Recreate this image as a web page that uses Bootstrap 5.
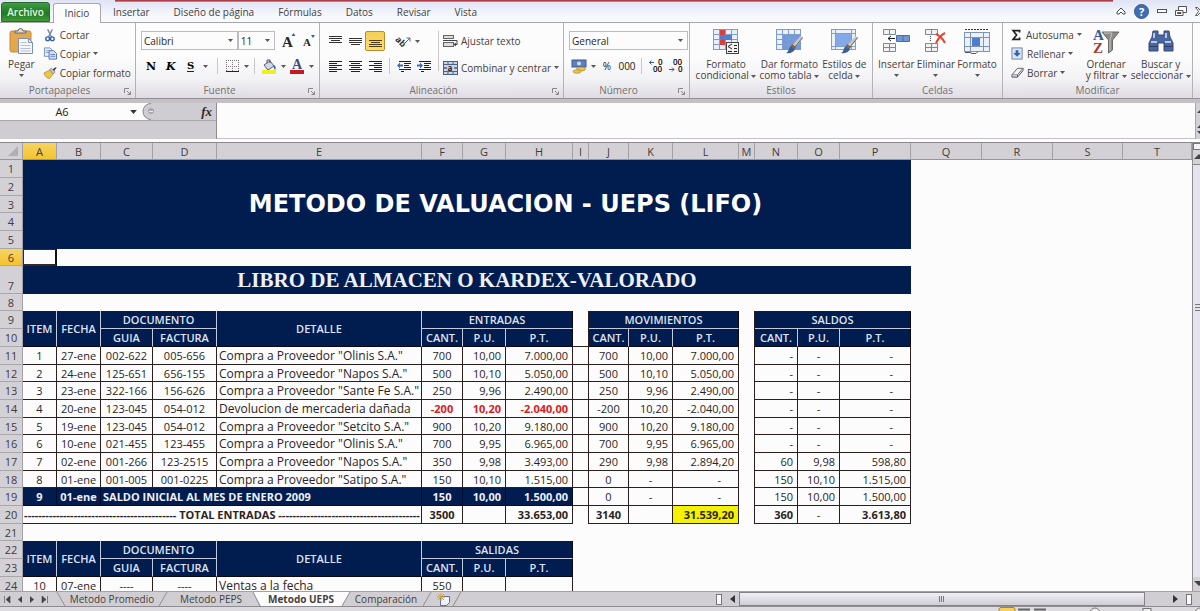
<!DOCTYPE html>
<html lang="es">
<head>
<meta charset="utf-8">
<meta name="viewport" content="width=device-width, initial-scale=1">
<title>Kardex valorado - Metodo UEPS</title>
<link href="https://cdn.jsdelivr.net/npm/bootstrap@5.3.0/dist/css/bootstrap.min.css" rel="stylesheet">
<style>
:root{--navy:#011c4f;--ink:#47403c;--line:#8f8c92;--head:#d3d1d6}
body{font-family:"Open Sans","Noto Sans",sans-serif;font-size:10px;line-height:12px;color:var(--ink);background:#fdfcfc;overflow:hidden}
button{border:0;background:none;padding:0;color:inherit;font:inherit;white-space:nowrap}
svg{display:block;flex:none;overflow:visible}
/* tab strip */
.strip{height:23px;background:linear-gradient(#dfe3f3,#f2f5fb 60%,#fbfbfd);border-bottom:1px solid #a8a6aa;position:relative}
.strip::before{content:"";position:absolute;left:115px;right:87px;top:0;height:2px;background:linear-gradient(#a52430,#d98c92)}
.strip .tab{height:22px;padding:2px 12px 0}
.strip .file{width:49px;height:20px;padding:0;margin:2px 3px 0 1px;background:linear-gradient(#3f9c43,#1f7a23 55%,#3f9a35);border:1px solid #2a6b2b;border-radius:3px 3px 0 0;color:#e9f5e4;font-weight:600}
.strip .current{height:20px;width:48px;padding:0 0 2px;margin-top:3px;background:#fdfcfc;border:1px solid #a8a6aa;border-bottom:0;border-radius:3px 3px 0 0}
/* ribbon */
.ribbon{height:76px;background:linear-gradient(#fdfcfc 45%,#f2f1f4 75%,#dfdde3);border-bottom:1px solid #929094}
.grp{flex:none;border-right:1px solid #b3b1b6;height:75px}
.grp .body{height:61px;padding:2px 0 0}
.grp .cap{height:14px;color:#74706f;text-align:center;position:relative}
.grp .cap svg{position:absolute;right:4px;top:4px}
.g1{width:136px}.g2{width:184px}.g3{width:244px}.g4{width:126px}.g5{width:183px}.g6{width:130px}.g7{width:190px}
.big{display:flex;flex-direction:column;align-items:center;height:58px;line-height:11px}
.big svg.ico{margin:3px 0 5px}
.big .dn{margin-top:4px}
.sm{display:flex;align-items:center;height:19px;gap:3px}
.tool{height:25px;padding-left:5px}
.tool + .tool{height:20px;align-items:center}
.ib{width:20px;height:20px;display:flex;align-items:center;justify-content:center;flex:none;color:#1b1818}
.car{width:8px;height:20px;display:flex;align-items:center;justify-content:center;flex:none}
.vs{width:1px;height:16px;background:#c9c7cc;flex:none}
.pick{appearance:none;height:19px;border:1px solid #bdbbc0;border-radius:0;background:#fdfcfc url("data:image/svg+xml,%3Csvg xmlns='http://www.w3.org/2000/svg' width='5' height='3'%3E%3Cpath d='M0 0h5L2.500 3z' fill='%23555'/%3E%3C/svg%3E") no-repeat right 4px center;padding:0 0 0 2px;font:inherit;color:#2b2725}
.pick-font{width:99px}.pick-size{width:38px}.pick-num{width:119px}
.hot{background:linear-gradient(#f6cf55,#f8dc70);border:1px solid #b98c2f;border-radius:2px}
/* formula bar */
.fbar{height:40px;background:#c5c3c8;border-top:4px solid #c5c0c3}
.namebox{width:217px;border-right:1px solid var(--line);background:#cfcdd2}
.namebox .top{height:18px;border-bottom:1px solid #aaa8ad}
.namebox input{width:124px;height:17px;border:0;padding:0;text-align:center;background:#fdfcfc;color:#222;font-size:11px}
.namebox .drop{width:18px;height:17px;background:#fdfcfc}
.fx{font:italic bold 13px "Liberation Serif",serif;color:#2d2a2a}
.formula{border:0;resize:none;background:#fdfcfc;height:35px}
.sidecell{width:5px;background:#d3d1d6;border-left:1px solid #a8a6aa;overflow:hidden}
/* sheet */
.work{margin-top:3px}
.pane{border-top:1px solid #8b888c}
table.cells{table-layout:fixed;width:100%;border-collapse:separate;border-spacing:0;font-size:11px;line-height:15px;color:#2b2423}
.cells .w16{width:16px}.cells .w23{width:23px}.cells .w34{width:34px}.cells .w40{width:40px}.cells .w41{width:41px}.cells .w42{width:42px}.cells .w43{width:43px}.cells .w44{width:44px}.cells .w52{width:52px}.cells .w64{width:64px}.cells .w66{width:66px}.cells .w67{width:67px}.cells .w70{width:70px}.cells .w71{width:71px}.cells .w205{width:205px}
.cells tr{height:18px}
.cells tr.slim{height:17px}
.cells tr.tall{height:28px}
.cells td,.cells th{padding:0;overflow:hidden;white-space:nowrap;text-align:center;font-weight:400;vertical-align:middle;line-height:15px}
.cells thead th{background:var(--head);border-right:1px solid #a3a1a6;border-bottom:1px solid #97959b;color:#3f3c3e}
.cells tbody th{background:var(--head);border-right:1px solid #a3a1a6;border-bottom:1px solid #a9a7ac;color:#3f3c3e}
.cells .sel{background:linear-gradient(#f8d560,#f3c32f)!important}
.cells .nv{background:var(--navy);color:#dfe3ef;font-weight:600;border-right:1px solid #c5cbdc;border-bottom:1px solid #c5cbdc}
.cells .nv.eb{border-bottom-color:#0a0a14}
.cells .nv.er{border-right-color:#0a0a14}
.cells .dk{background:var(--navy);color:#eef0f8;font-weight:700;border-right:1px solid #000b28;border-bottom:1px solid #000b28}
.cells .b{border-right:1px solid #2a1f1d;border-bottom:1px solid #2a1f1d}
.cells .edge{border-right:1px solid #2a1f1d}
.cells .r{text-align:right;padding-right:4px}
.cells .d1{text-align:right;padding-right:17px}
.cells .l{text-align:left;padding-left:2px}
.cells .b.l{font-size:12px}
.cells .f{font-weight:700}
.cells .neg{font-weight:700;color:#d8201c}
.cells .yel{background:#f4f200}
.cells .band1{background:var(--navy);color:#fff;font:bold 24px/28px "DejaVu Sans",sans-serif;padding:0 0 2px 77px}
.cells .band2{background:var(--navy);color:#eef0f8;font:bold 21px/26px "Liberation Serif",serif}
.cells .act{border:1px solid #3a2626;border-right:2px solid #111;border-bottom:2px solid #3a2626}
.vbar{width:8px;background:#d3d1d6;border-left:1px solid var(--line);border-top:1px solid #8b888c;overflow:hidden}
.vbar .split{height:7px;background:#f4f2f4;border:1px solid #777;border-right:0}
.vbar .thumb{background:#e4e3ee;border-top:1px solid #8b888c}
/* sheet tabs */
.foot{height:15px;background:#d0ced3;border-top:1px solid #a3a1a6}
.foot .shut{height:14px;line-height:14px}
.foot .on{background:#fdfcfc;font-weight:700;height:14px;line-height:14px}
.steps{width:57px}
.t1{width:90px}.t2{width:84px}.t3{width:80px}.t4{width:70px}
.hscroll{width:41%}
.hthumb{height:14px;border:1px solid #85828a;background:linear-gradient(#f0f0f5,#cfcdd6)}
.grip{width:6px;height:11px;border:1px solid #777;background:#fbfafa}
.status{height:5px;background:#dddbe0;border-top:1px solid #8f8c92;overflow:hidden}
</style>
</head>
<body>
<svg width="0" height="0" class="position-absolute" aria-hidden="true">
  <defs>
    <symbol id="dn" viewBox="0 0 5 3"><path d="M0 0h5L2.500 3z" fill="#5a5557"/></symbol>
    <symbol id="launch" viewBox="0 0 7 7"><path d="M.5 5V.5H5M3 3l3 3M6.500 3.500v3h-3" fill="none" stroke="#88858a"/></symbol>
    <symbol id="brush" viewBox="0 0 18 18"><path d="M17 1L9 10" stroke="#c9c6c4" stroke-width="3.500"/><path d="M17.500 1.500L10 11" stroke="#6e6865" stroke-width="1"/><path d="M7 8l4 3-1 2-4-3z" fill="#8a6236"/><path d="M6 10l4 3c-1 3-5 5-9 4 3-1 2-5 5-7z" fill="#3a6093"/></symbol>
  </defs>
</svg>
<div class="vh-100 d-flex flex-column">
  <nav class="strip d-flex flex-shrink-0" aria-label="Cinta">
    <button class="file">Archivo</button>
    <button class="current">Inicio</button>
    <button class="tab">Insertar</button>
    <button class="tab">Diseño de página</button>
    <button class="tab">Fórmulas</button>
    <button class="tab">Datos</button>
    <button class="tab">Revisar</button>
    <button class="tab">Vista</button>
    <div class="ms-auto d-flex align-items-center gap-2">
      <button aria-label="Minimizar cinta"><svg width="10" height="8" viewBox="0 0 10 8"><path d="M1 5l4-4 4 4v2H7L5 5 3 7H1z" fill="#fff" stroke="#4c4a50"/></svg></button>
      <button aria-label="Ayuda"><svg width="15" height="15" viewBox="0 0 15 15"><circle cx="7.500" cy="7.500" r="7" fill="#3f6fae" stroke="#345b93"/><text x="7.500" y="11.500" text-anchor="middle" font-size="11" font-weight="700" fill="#fff">?</text></svg></button>
      <button aria-label="Minimizar"><svg width="10" height="6" viewBox="0 0 10 6"><rect x=".5" y="1.500" width="9" height="3" fill="#fff" stroke="#55535a"/></svg></button>
      <button aria-label="Restaurar"><svg width="12" height="11" viewBox="0 0 12 11"><path d="M3.500 4V.5h8v6H8M.5 4.500H8v5H.5z" fill="#fff" stroke="#55535a"/><path d="M2.500 6.500H6v1H2.500z" fill="none" stroke="#55535a"/></svg></button>
      <button aria-label="Cerrar"><svg width="5" height="9" viewBox="0 0 5 9"><path d="M.5.5h2L5 3M.5 8.500h2L5 6M.5 .5l3 4-3 4" fill="#fff" stroke="#55535a"/></svg></button>
    </div>
  </nav>

  <div class="ribbon d-flex flex-shrink-0">
    <section class="grp g1">
      <div class="body d-flex">
        <button class="big ms-2"><svg class="ico" width="26" height="26" viewBox="0 0 26 26"><rect x="2" y="3" width="21" height="21" rx="2" fill="#e3a84e" stroke="#c28a38"/><path d="M7 5V3h3a2.500 2.500 0 015 0h3v2z" fill="#ddd" stroke="#666"/><path d="M10.500 10.500h10l4 4v11h-14z" fill="#f4f7fd" stroke="#7f8fb0"/><path d="M20.500 10.500v4h4" fill="none" stroke="#7f8fb0"/><path d="M12.500 14.500h6M12.500 17.500h10M12.500 20.500h10M12.500 23h10" stroke="#b4c0da"/></svg><span>Pegar</span><svg class="dn" width="5" height="3"><use href="#dn"/></svg></button>
        <div class="ps-2">
          <button class="sm"><svg width="14" height="14" viewBox="0 0 15 14"><path d="M5 1l4 8M10 1L6 9" stroke="#7d8aa0" stroke-width="1.500"/><circle cx="5" cy="11" r="2" fill="none" stroke="#2f5fa8" stroke-width="1.500"/><circle cx="10" cy="11" r="2" fill="none" stroke="#2f5fa8" stroke-width="1.500"/></svg>Cortar</button>
          <button class="sm"><svg width="14" height="13" viewBox="0 0 15 13"><path d="M1.500.5h6l2 2v7h-8z" fill="#eaf1fb" stroke="#6f8ab8"/><path d="M3 3.500h4M3 5.500h3" stroke="#7c98c8"/><path d="M6.500 3.500h5l3 3v6h-8z" fill="#d5e3f7" stroke="#4d70ab"/><path d="M8 7.500h5M8 9.500h5" stroke="#5d80ba"/></svg>Copiar<svg width="5" height="3"><use href="#dn"/></svg></button>
          <button class="sm"><svg width="14" height="13" viewBox="0 0 15 13"><path d="M1 7l6-3 4 4-4 5c-2 0-5-2-6-6z" fill="#f0c542" stroke="#a9822a" stroke-width=".7"/><path d="M7 3.500l2-1.500 4 4-2 2z" fill="#c3c6cc" stroke="#6b6b70" stroke-width=".7"/><path d="M10.500 3L14 .5l.5 1L12 5z" fill="#3c3a40"/></svg>Copiar formato</button>
        </div>
      </div>
      <div class="cap pe-3">Portapapeles<svg width="7" height="7"><use href="#launch"/></svg></div>
    </section>

    <section class="grp g2">
      <div class="body pt-2">
        <div class="tool d-flex">
          <select class="pick pick-font" aria-label="Fuente"><option>Calibri</option></select>
          <select class="pick pick-size" aria-label="Tamaño"><option>11</option></select>
          <button class="ib ms-1" aria-label="Aumentar tamaño"><svg width="14" height="16" viewBox="0 0 14 16"><text x="0" y="14" font-family="Liberation Serif,serif" font-weight="700" font-size="15" fill="#2a2728">A</text><path d="M9.500 3L11.500 0l2 3z" fill="#3b5f9b"/></svg></button>
          <button class="ib" aria-label="Disminuir tamaño"><svg width="12" height="14" viewBox="0 0 12 14"><text x="0" y="12" font-family="Liberation Serif,serif" font-weight="700" font-size="11" fill="#2a2728">A</text><path d="M8 1L10 4l2-3z" fill="#3b5f9b"/></svg></button>
        </div>
        <div class="tool d-flex">
          <button class="ib" aria-label="Negrita"><svg width="10" height="10" viewBox="0 0 10 10"><text x="0" y="9" font-weight="700" font-size="11" font-family="DejaVu Serif,serif">N</text></svg></button>
          <button class="ib" aria-label="Cursiva"><svg width="11" height="10" viewBox="0 0 11 10"><text x="0" y="9" font-weight="700" font-style="italic" font-size="11" font-family="DejaVu Serif,serif">K</text></svg></button>
          <button class="ib" aria-label="Subrayado"><svg width="8" height="12" viewBox="0 0 8 12"><text x="0" y="9" font-weight="700" font-size="10" font-family="DejaVu Serif,serif">S</text><path d="M0 11.500h7" stroke="#222"/></svg></button>
          <span class="car"><svg width="5" height="3"><use href="#dn"/></svg></span>
          <span class="vs ms-2 me-1"></span>
          <button class="ib" aria-label="Bordes"><svg width="13" height="13" viewBox="0 0 13 13"><path d="M.5 0v11M6.500 0v11M12.500 0v11M0 .5h13M0 6.500h13" stroke="#77747a" stroke-dasharray="1 1" fill="none"/><path d="M0 11.500h13" stroke="#222"/></svg></button>
          <span class="car"><svg width="5" height="3"><use href="#dn"/></svg></span>
          <span class="vs ms-1 me-1"></span>
          <button class="ib" aria-label="Relleno"><svg width="15" height="15" viewBox="0 0 15 15"><path d="M2 6l6-4 4 5-6 4z" fill="#cfd9e8" stroke="#4a5f82"/><path d="M5 4V1h3v3" fill="none" stroke="#555"/><path d="M12 6c2 1 2 4 1 5-1-1-1.500-3-1-5z" fill="#2f5fa8"/><rect y="11" width="14" height="4" fill="#f5ee1e"/></svg></button>
          <span class="car"><svg width="5" height="3"><use href="#dn"/></svg></span>
          <button class="ib" aria-label="Color de fuente"><svg width="15" height="15" viewBox="0 0 15 15"><text x="2" y="10" font-family="Liberation Serif,serif" font-weight="700" font-size="14" fill="#3c4c7c">A</text><rect y="11" width="14" height="4" fill="#c6191e"/></svg></button>
          <span class="car"><svg width="5" height="3"><use href="#dn"/></svg></span>
        </div>
      </div>
      <div class="cap pe-3">Fuente<svg width="7" height="7"><use href="#launch"/></svg></div>
    </section>

    <section class="grp g3">
      <div class="body pt-2 d-flex">
        <div>
          <div class="tool d-flex">
            <button class="ib" aria-label="Arriba"><svg width="13" height="12" viewBox="0 0 13 12"><path d="M0 1.500h13M0 3.500h13M2 5.500h9M0 7.500h13" stroke="#333"/></svg></button>
            <button class="ib" aria-label="Medio"><svg width="13" height="12" viewBox="0 0 13 12"><path d="M0 3.500h13M0 5.500h13M0 7.500h13M2 9.500h9" stroke="#333"/></svg></button>
            <button class="ib hot" aria-label="Abajo"><svg width="13" height="12" viewBox="0 0 13 12"><path d="M0 5.500h13M2 7.500h9M0 9.500h13M0 11.500h13" stroke="#4d3c14"/></svg></button>
            <button class="ib ms-2" aria-label="Orientación"><svg width="15" height="14" viewBox="0 0 15 14"><text x="0" y="9" font-size="9" font-weight="700" transform="rotate(45 3 6)" fill="#333">ab</text><path d="M5 13l9-9M14 7.500V4h-3.500" fill="none" stroke="#666"/></svg></button>
            <span class="car"><svg width="5" height="3"><use href="#dn"/></svg></span>
          </div>
          <div class="tool d-flex">
            <button class="ib" aria-label="Izquierda"><svg width="13" height="12" viewBox="0 0 13 12"><path d="M0 1.500h13M0 3.500h8M0 5.500h13M0 7.500h8M0 9.500h13M0 11.500h8" stroke="#222"/></svg></button>
            <button class="ib" aria-label="Centro"><svg width="13" height="12" viewBox="0 0 13 12"><path d="M0 1.500h13M2 3.500h9M0 5.500h13M2 7.500h9M0 9.500h13M2 11.500h9" stroke="#222"/></svg></button>
            <button class="ib" aria-label="Derecha"><svg width="13" height="12" viewBox="0 0 13 12"><path d="M0 1.500h13M5 3.500h8M0 5.500h13M5 7.500h8M0 9.500h13M5 11.500h8" stroke="#222"/></svg></button>
            <span class="vs ms-1 me-1"></span>
            <button class="ib" aria-label="Disminuir sangría"><svg width="15" height="12" viewBox="0 0 15 12"><path d="M2 1.500h12M7 3.500h7M7 5.500h5M7 7.500h7M2 9.500h12M4 11.500h3" stroke="#222"/><path d="M0 5.500l3-3v2h3v2H3v2z" fill="#3d6db5"/></svg></button>
            <button class="ib" aria-label="Aumentar sangría"><svg width="15" height="12" viewBox="0 0 15 12"><path d="M2 1.500h12M7 3.500h7M7 5.500h5M7 7.500h7M2 9.500h12M4 11.500h3" stroke="#222"/><path d="M6 5.500l-3-3v2H0v2h3v2z" fill="#3d6db5"/></svg></button>
          </div>
        </div>
        <span class="vs h-75 ms-1 me-1"></span>
        <div>
          <button class="sm mb-1"><svg width="15" height="14" viewBox="0 0 15 14"><rect x=".5" y="1.500" width="10" height="3" fill="#ddd" stroke="#666"/><rect x=".5" y="8.500" width="10" height="4" fill="#ddd" stroke="#666"/><path d="M0 6.500h14V11M14 10.500h-3M13 9l-2 1.500L13 12" fill="none" stroke="#444"/></svg>Ajustar texto</button>
          <button class="sm mt-2"><svg width="15" height="14" viewBox="0 0 15 14"><rect x=".5" y=".5" width="14" height="13" fill="#c9d6ec" stroke="#4a5f8a"/><path d="M5 .5v3M10 .5v3M.5 3.500h14M.5 10.500h14M5 10.500v3M10 10.500v3" stroke="#4a5f8a"/><path d="M1 7h3M11 7h3" stroke="#222"/><text x="4.500" y="10" font-size="8" font-weight="700" fill="#222">a</text></svg>Combinar y centrar<svg width="5" height="3"><use href="#dn"/></svg></button>
        </div>
      </div>
      <div class="cap pe-3">Alineación<svg width="7" height="7"><use href="#launch"/></svg></div>
    </section>

    <section class="grp g4">
      <div class="body pt-2">
        <div class="tool"><select class="pick pick-num" aria-label="Formato de número"><option>General</option></select></div>
        <div class="tool d-flex">
          <button class="ib" aria-label="Moneda"><svg width="16" height="15" viewBox="0 0 16 15"><rect x="1" y="1" width="14" height="7" fill="#5d80bb" stroke="#3b5a94"/><circle cx="8" cy="4.500" r="2" fill="#cfdcf2"/><ellipse cx="10" cy="10" rx="4.500" ry="2" fill="#e7c24a" stroke="#a5822a" stroke-width=".6"/><ellipse cx="6" cy="12.500" rx="4" ry="1.800" fill="#e7c24a" stroke="#a5822a" stroke-width=".6"/></svg></button>
          <span class="car"><svg width="5" height="3"><use href="#dn"/></svg></span>
          <button class="ib">%</button>
          <button class="ib">000</button>
          <span class="vs ms-1 me-1"></span>
          <button class="ib" aria-label="Aumentar decimales"><svg width="14" height="14" viewBox="0 0 14 14"><path d="M0 3.500h5M2.500 1.500l-2 2 2 2" stroke="#2f5fa8" fill="none"/><text x="9" y="6" font-size="8" font-weight="600">0</text><text x="4" y="13" font-size="8" font-weight="600">00</text></svg></button>
          <button class="ib" aria-label="Disminuir decimales"><svg width="14" height="14" viewBox="0 0 14 14"><path d="M0 10.500h5M3 8.500l2 2-2 2" stroke="#2f5fa8" fill="none"/><text x="4" y="6" font-size="8" font-weight="600">00</text><text x="9" y="13" font-size="8" font-weight="600">0</text></svg></button>
        </div>
      </div>
      <div class="cap pe-3">Número<svg width="7" height="7"><use href="#launch"/></svg></div>
    </section>

    <section class="grp g5">
      <div class="body d-flex justify-content-around px-1">
        <button class="big"><svg class="ico" width="28" height="26" viewBox="0 0 28 26"><rect x="1.500" y="1.500" width="24" height="20" fill="#e8effa" stroke="#7f9ccb"/><path d="M7.500 1v21M13.500 1v21M19.500 1v21M1 6.500h25M1 11.500h25M1 16.500h25" stroke="#7f9ccb"/><path d="M8 2h5v5H8zM8 12h5v5H8z" fill="#d6413c"/><path d="M8 7h12v5H8z" fill="#4f7ed0"/><rect x="14.500" y="14.500" width="12" height="11" fill="#f2f2f2" stroke="#444"/><path d="M20 16l-4 2.500 4 2.500M16 23.500h4M22 17.500h3M22 20.500h3M22 23.500h3" fill="none" stroke="#222"/></svg><span>Formato<br>condicional <svg class="d-inline" width="5" height="3"><use href="#dn"/></svg></span></button>
        <button class="big"><svg class="ico" width="28" height="26" viewBox="0 0 28 26"><rect x="1.500" y="1.500" width="24" height="20" fill="#eaf1fb" stroke="#7f9ccb"/><path d="M8 7h18v15H8z" fill="#6f9ae0"/><path d="M7.500 1v21M13.500 1v21M19.500 1v21M1 6.500h25M1 11.500h25M1 16.500h25" stroke="#7f9ccb"/><use href="#brush" x="10" y="8" width="18" height="18"/></svg><span>Dar formato<br>como tabla <svg class="d-inline" width="5" height="3"><use href="#dn"/></svg></span></button>
        <button class="big"><svg class="ico" width="28" height="26" viewBox="0 0 28 26"><rect x="1.500" y="1.500" width="24" height="20" fill="#eaf1fb" stroke="#7f9ccb"/><path d="M5.500 1v21M21.500 1v21M1 5.500h25M1 18.500h25" stroke="#7f9ccb"/><path d="M6 6h15v12H6z" fill="#84a9e8"/><use href="#brush" x="10" y="8" width="18" height="18"/></svg><span>Estilos de<br>celda <svg class="d-inline" width="5" height="3"><use href="#dn"/></svg></span></button>
      </div>
      <div class="cap">Estilos</div>
    </section>

    <section class="grp g6">
      <div class="body d-flex justify-content-around px-1">
        <button class="big"><svg class="ico" width="28" height="26" viewBox="0 0 28 26"><path d="M1.500 1.500h12v5h-12zM7.500 1.500v5M1.500 15.500h12v8h-12zM7.500 15.500v8M1.500 19.500h12" fill="#f2f2f4" stroke="#7e8794"/><path d="M14.500 7.500h13v6h-13z" fill="#7296d3" stroke="#486fb0"/><path d="M21 7.500v6" stroke="#486fb0"/><path d="M6 10.500h7M9 8l-3 2.500L9 13" fill="none" stroke="#222"/></svg><span>Insertar</span><svg class="dn" width="5" height="3"><use href="#dn"/></svg></button>
        <button class="big"><svg class="ico" width="24" height="26" viewBox="0 0 24 26"><path d="M1.500 1.500h12v5h-12zM7.500 1.500v5M1.500 15.500h12v8h-12zM7.500 15.500v8M1.500 19.500h12" fill="#f2f2f4" stroke="#7e8794"/><path d="M6.500 8v6" stroke="#444" stroke-dasharray="1 1"/><path d="M12 6c4 2 7 5 9 9M21 5c-4 2-7 6-9 10" stroke="#e2462f" stroke-width="2" fill="none"/></svg><span>Eliminar</span><svg class="dn" width="5" height="3"><use href="#dn"/></svg></button>
        <button class="big"><svg class="ico" width="28" height="26" viewBox="0 0 28 26"><path d="M2 1.500h24" stroke="#333" stroke-dasharray="2 1"/><rect x="1.500" y="4.500" width="25" height="19" fill="#eaf1fb" stroke="#7e93b8"/><path d="M7.500 4v20M20.500 4v20M1 9.500h26M1 18.500h26" stroke="#7e93b8"/><path d="M9 10h8v8H9z" fill="#4f7ed0"/><path d="M2 24.500h5l2 1h4l2-2" fill="none" stroke="#555"/></svg><span>Formato</span><svg class="dn" width="5" height="3"><use href="#dn"/></svg></button>
      </div>
      <div class="cap">Celdas</div>
    </section>

    <section class="grp g7">
      <div class="body d-flex ps-2">
        <div>
          <button class="sm"><svg width="12" height="12" viewBox="0 0 14 13"><path d="M10 3.500V1.500H2.500l4 5-4 5H10V9.500" fill="none" stroke="#222" stroke-width="2"/></svg>Autosuma <svg width="5" height="3"><use href="#dn"/></svg></button>
          <button class="sm"><svg width="13" height="13" viewBox="0 0 14 13"><rect x="1" y=".5" width="11" height="12" fill="#dbe5f4" stroke="#6683b3"/><path d="M5 3h3v3h2.500l-4 4-4-4H5z" fill="#2f63b8"/></svg>Rellenar <svg width="5" height="3"><use href="#dn"/></svg></button>
          <button class="sm"><svg width="13" height="13" viewBox="0 0 14 13"><path d="M1 9l6-7h6l-6 7z" fill="#f6f6f8" stroke="#5a5960"/><path d="M1 9v2.500h6V9M7 11.500l6-7V2" fill="#cfcfd6" stroke="#5a5960"/></svg>Borrar <svg width="5" height="3"><use href="#dn"/></svg></button>
        </div>
        <button class="big ms-1"><svg class="ico" width="28" height="26" viewBox="0 0 28 26"><path d="M10 4h17l-6.500 8v10l-4 3V12z" fill="#8d8a88" stroke="#6b6866"/><path d="M12 5h8l-2 7v11" fill="none" stroke="#c9c7c5"/><text x="1" y="12" font-family="Liberation Serif,serif" font-weight="700" font-size="15" fill="#3a5a94">A</text><text x="1" y="25" font-family="Liberation Serif,serif" font-weight="700" font-size="15" fill="#a8372c">Z</text></svg><span>Ordenar<br>y filtrar <svg class="d-inline" width="5" height="3"><use href="#dn"/></svg></span></button>
        <button class="big ms-1"><svg class="ico" width="26" height="26" viewBox="0 0 26 26"><path d="M5 3h5v4h6V3h5l1 6 3 6v8h-9v-8h-6v8H1v-8l3-6z" fill="#4a66a0" stroke="#35497a"/><path d="M3 14h6M17 14h6M6 5v5M18 5v5" stroke="#b9c7e4" stroke-width="2"/><path d="M1 18.500h9M16 18.500h9" stroke="#2b3d69"/></svg><span>Buscar y<br>seleccionar <svg class="d-inline" width="5" height="3"><use href="#dn"/></svg></span></button>
      </div>
      <div class="cap">Modificar</div>
    </section>
  </div>

  <div class="fbar d-flex flex-shrink-0">
    <div class="namebox flex-shrink-0">
      <div class="top d-flex align-items-center">
        <input value="A6" aria-label="Cuadro de nombres">
        <button class="drop d-flex align-items-center justify-content-center" aria-label="Lista de nombres"><svg width="7" height="4" viewBox="0 0 5 3"><path d="M0 0h5L2.500 3z" fill="#333"/></svg></button>
        <svg width="17" height="17" viewBox="0 0 17 17"><path d="M9 0H0v17h9A8.500 8.500 0 019 0z" fill="#fdfcfc"/><path d="M9 .5a8 8 0 000 16" fill="none" stroke="#8f8c92"/><circle cx="9" cy="8" r="3" fill="#aaa8ad"/><path d="M7 8.500h4" stroke="#eee"/></svg>
        <button class="fx ms-auto me-1" aria-label="Insertar función">fx</button>
      </div>
    </div>
    <textarea class="formula flex-fill" aria-label="Barra de fórmulas"></textarea>
    <div class="sidecell"><svg width="5" height="34" viewBox="0 0 5 34"><path d="M1 10l4-4v4zM1 25l4-4v4zM1 28l4 4v-4z" fill="#444"/></svg></div>
  </div>

  <div class="work d-flex flex-fill overflow-hidden">
    <div class="pane flex-fill overflow-hidden">
<table class="cells">
<colgroup><col class="w23"><col class="w34"><col class="w44"><col class="w52"><col class="w64"><col class="w205"><col class="w41"><col class="w43"><col class="w67"><col class="w16"><col class="w40"><col class="w44"><col class="w66"><col class="w16"><col class="w43"><col class="w42"><col class="w71"><col class="w71"><col class="w71"><col class="w70"><col></colgroup>
<thead><tr class="slim"><th><svg class="ms-auto me-1" width="10" height="10"><path d="M10 0v10H0z" fill="#b1afb4"/></svg></th><th class="sel">A</th><th>B</th><th>C</th><th>D</th><th>E</th><th>F</th><th>G</th><th>H</th><th>I</th><th>J</th><th>K</th><th>L</th><th>M</th><th>N</th><th>O</th><th>P</th><th>Q</th><th>R</th><th>S</th><th>T</th></tr></thead>
<tbody>
<tr><th>1</th><td class="band1" colspan="16" rowspan="5">METODO DE VALUACION - UEPS (LIFO)</td><td colspan="4" rowspan="5"></td></tr>
<tr><th>2</th></tr>
<tr class="slim"><th>3</th></tr>
<tr><th>4</th></tr>
<tr><th>5</th></tr>
<tr class="slim"><th class="sel">6</th><td class="act"></td><td colspan="19"></td></tr>
<tr class="tall"><th class="align-bottom">7</th><td class="band2" colspan="16">LIBRO DE ALMACEN O KARDEX-VALORADO</td><td colspan="4"></td></tr>
<tr class="slim"><th>8</th><td colspan="20"></td></tr>
<tr><th>9</th><td class="nv eb" rowspan="2">ITEM</td><td class="nv eb" rowspan="2">FECHA</td><td class="nv" colspan="2">DOCUMENTO</td><td class="nv eb" rowspan="2">DETALLE</td><td class="nv er" colspan="3">ENTRADAS</td><td class="edge"></td><td class="nv er" colspan="3">MOVIMIENTOS</td><td class="edge"></td><td class="nv er" colspan="3">SALDOS</td><td colspan="4"></td></tr>
<tr><th>10</th><td class="nv eb">GUIA</td><td class="nv eb">FACTURA</td><td class="nv eb">CANT.</td><td class="nv eb">P.U.</td><td class="nv eb er">P.T.</td><td class="b"></td><td class="nv eb">CANT.</td><td class="nv eb">P.U.</td><td class="nv eb er">P.T.</td><td class="edge"></td><td class="nv eb">CANT.</td><td class="nv eb">P.U.</td><td class="nv eb er">P.T.</td><td colspan="4"></td></tr>
<tr><th>11</th><td class="b">1</td><td class="b">27-ene</td><td class="b">002-622</td><td class="b">005-656</td><td class="b l">Compra a Proveedor "Olinis S.A."</td><td class="b">700</td><td class="b r">10,00</td><td class="b r">7.000,00</td><td class="b"></td><td class="b">700</td><td class="b r">10,00</td><td class="b r">7.000,00</td><td class="edge"></td><td class="b r">-</td><td class="b">-</td><td class="b d1">-</td><td colspan="4"></td></tr>
<tr class="slim"><th>12</th><td class="b">2</td><td class="b">24-ene</td><td class="b">125-651</td><td class="b">656-155</td><td class="b l">Compra a Proveedor "Napos S.A."</td><td class="b">500</td><td class="b r">10,10</td><td class="b r">5.050,00</td><td class="b"></td><td class="b">500</td><td class="b r">10,10</td><td class="b r">5.050,00</td><td class="edge"></td><td class="b r">-</td><td class="b">-</td><td class="b d1">-</td><td colspan="4"></td></tr>
<tr><th>13</th><td class="b">3</td><td class="b">23-ene</td><td class="b">322-166</td><td class="b">156-626</td><td class="b l">Compra a Proveedor "Sante Fe S.A."</td><td class="b">250</td><td class="b r">9,96</td><td class="b r">2.490,00</td><td class="b"></td><td class="b">250</td><td class="b r">9,96</td><td class="b r">2.490,00</td><td class="edge"></td><td class="b r">-</td><td class="b">-</td><td class="b d1">-</td><td colspan="4"></td></tr>
<tr><th>14</th><td class="b">4</td><td class="b">20-ene</td><td class="b">123-045</td><td class="b">054-012</td><td class="b l">Devolucion de mercaderia dañada</td><td class="b neg">-200</td><td class="b r neg">10,20</td><td class="b r neg">-2.040,00</td><td class="b"></td><td class="b">-200</td><td class="b r">10,20</td><td class="b r">-2.040,00</td><td class="edge"></td><td class="b r">-</td><td class="b">-</td><td class="b d1">-</td><td colspan="4"></td></tr>
<tr class="slim"><th>15</th><td class="b">5</td><td class="b">19-ene</td><td class="b">123-045</td><td class="b">054-012</td><td class="b l">Compra a Proveedor "Setcito S.A."</td><td class="b">900</td><td class="b r">10,20</td><td class="b r">9.180,00</td><td class="b"></td><td class="b">900</td><td class="b r">10,20</td><td class="b r">9.180,00</td><td class="edge"></td><td class="b r">-</td><td class="b">-</td><td class="b d1">-</td><td colspan="4"></td></tr>
<tr><th>16</th><td class="b">6</td><td class="b">10-ene</td><td class="b">021-455</td><td class="b">123-455</td><td class="b l">Compra a Proveedor "Olinis S.A."</td><td class="b">700</td><td class="b r">9,95</td><td class="b r">6.965,00</td><td class="b"></td><td class="b">700</td><td class="b r">9,95</td><td class="b r">6.965,00</td><td class="edge"></td><td class="b r">-</td><td class="b">-</td><td class="b d1">-</td><td colspan="4"></td></tr>
<tr><th>17</th><td class="b">7</td><td class="b">02-ene</td><td class="b">001-266</td><td class="b">123-2515</td><td class="b l">Compra a Proveedor "Napos S.A."</td><td class="b">350</td><td class="b r">9,98</td><td class="b r">3.493,00</td><td class="b"></td><td class="b">290</td><td class="b r">9,98</td><td class="b r">2.894,20</td><td class="edge"></td><td class="b r">60</td><td class="b r">9,98</td><td class="b r">598,80</td><td colspan="4"></td></tr>
<tr class="slim"><th>18</th><td class="b">8</td><td class="b">01-ene</td><td class="b">001-005</td><td class="b">001-0225</td><td class="b l">Compra a Proveedor "Satipo S.A."</td><td class="b">150</td><td class="b r">10,10</td><td class="b r">1.515,00</td><td class="b"></td><td class="b">0</td><td class="b">-</td><td class="b d1">-</td><td class="edge"></td><td class="b r">150</td><td class="b r">10,10</td><td class="b r">1.515,00</td><td colspan="4"></td></tr>
<tr><th>19</th><td class="dk">9</td><td class="dk">01-ene</td><td class="dk l" colspan="3">SALDO INICIAL AL MES DE ENERO 2009</td><td class="dk">150</td><td class="dk r">10,00</td><td class="dk r">1.500,00</td><td class="b"></td><td class="b">0</td><td class="b">-</td><td class="b d1">-</td><td class="edge"></td><td class="b r">150</td><td class="b r">10,00</td><td class="b r">1.500,00</td><td colspan="4"></td></tr>
<tr><th>20</th><td class="b f" colspan="5">------------------------------------------- TOTAL ENTRADAS ----------------------------------------</td><td class="b f">3500</td><td class="b"></td><td class="b r f">33.653,00</td><td class="edge"></td><td class="b f">3140</td><td class="b"></td><td class="b r f yel">31.539,20</td><td class="edge"></td><td class="b r f">360</td><td class="b">-</td><td class="b r f">3.613,80</td><td colspan="4"></td></tr>
<tr class="slim"><th>21</th><td colspan="20"></td></tr>
<tr><th>22</th><td class="nv eb" rowspan="2">ITEM</td><td class="nv eb" rowspan="2">FECHA</td><td class="nv" colspan="2">DOCUMENTO</td><td class="nv eb" rowspan="2">DETALLE</td><td class="nv er" colspan="3">SALIDAS</td><td colspan="12"></td></tr>
<tr><th>23</th><td class="nv eb">GUIA</td><td class="nv eb">FACTURA</td><td class="nv eb">CANT.</td><td class="nv eb">P.U.</td><td class="nv eb er">P.T.</td><td colspan="12"></td></tr>
<tr class="slim"><th>24</th><td class="b">10</td><td class="b">07-ene</td><td class="b">----</td><td class="b">----</td><td class="b l">Ventas a la fecha</td><td class="b">550</td><td class="b"></td><td class="b"></td><td colspan="12"></td></tr>
</tbody>
</table>
    </div>
    <div class="vbar d-flex flex-column flex-shrink-0">
      <div class="split"></div>
      <svg width="7" height="14" viewBox="0 0 7 14"><path d="M1 9l5-5 1 1v4z" fill="#444"/></svg>
      <div class="thumb flex-fill d-flex align-items-center"><svg width="7" height="136" viewBox="0 0 7 136"><path d="M2 1.500h5M2 4.500h5M2 7.500h5" stroke="#777"/></svg></div>
      <svg width="7" height="14" viewBox="0 0 7 14"><path d="M1 4l5 5 1-1V4z" fill="#444"/></svg>
    </div>
  </div>

  <div class="foot d-flex align-items-center flex-shrink-0">
    <div class="steps d-flex gap-2 ps-1">
      <button aria-label="Primera hoja"><svg width="6" height="7" viewBox="0 0 6 7"><path d="M.5 0v7M6 0v7L2 3.500z" fill="#444" stroke="#444" stroke-width=".6"/></svg></button>
      <button aria-label="Hoja anterior"><svg width="4" height="7" viewBox="0 0 4 7"><path d="M4 0v7L0 3.500z" fill="#444"/></svg></button>
      <button aria-label="Hoja siguiente"><svg width="4" height="7" viewBox="0 0 4 7"><path d="M0 0v7l4-3.500z" fill="#444"/></svg></button>
      <button aria-label="Última hoja"><svg width="6" height="7" viewBox="0 0 6 7"><path d="M5.500 0v7M0 0v7l4-3.500z" fill="#444" stroke="#444" stroke-width=".6"/></svg></button>
    </div>
    <svg width="10" height="14" viewBox="0 0 10 14"><path d="M0 0l8 14" stroke="#8f8c92"/></svg>
    <button class="shut t1">Metodo Promedio</button>
    <svg width="12" height="14" viewBox="0 0 12 14"><path d="M10 0L2 14" stroke="#8f8c92"/></svg>
    <button class="shut t2">Metodo PEPS</button>
    <svg width="8" height="14" viewBox="0 0 8 14"><path d="M0 0h8v14z" fill="#fdfcfc"/><path d="M0 0l7 14" stroke="#8f8c92"/></svg>
    <button class="on t3">Metodo UEPS</button>
    <svg width="10" height="14" viewBox="0 0 10 14"><path d="M0 0h9L1 14H0z" fill="#fdfcfc"/><path d="M9 0L1 14" stroke="#8f8c92"/></svg>
    <button class="shut t4">Comparación</button>
    <svg width="12" height="14" viewBox="0 0 12 14"><path d="M10 0L2 14" stroke="#8f8c92"/></svg>
    <button aria-label="Insertar hoja" class="ps-1"><svg width="14" height="13" viewBox="0 0 14 13"><path d="M3.500 3.500h9v6l-3 3h-6z" fill="#eef3fb" stroke="#5a6f99"/><path d="M4 0v8M0 4h8M1 1l6 6M7 1L1 7" stroke="#dd9b2a"/></svg></button>
    <svg width="12" height="14" viewBox="0 0 12 14"><path d="M10 0L2 14" stroke="#8f8c92"/></svg>
    <div class="hscroll ms-auto d-flex align-items-center gap-1">
      <span class="grip ms-2"></span>
      <svg width="5" height="8" viewBox="0 0 5 8" class="ms-1"><path d="M5 0v8L0 4z" fill="#333"/></svg>
      <div class="hthumb flex-fill d-flex align-items-center justify-content-center"><svg width="6" height="6"><path d="M.5 0v6M2.500 0v6M4.500 0v6" stroke="#777"/></svg></div>
      <svg width="5" height="8" viewBox="0 0 5 8" class="ms-4"><path d="M0 0v8l5-4z" fill="#333"/></svg>
      <span class="grip ms-1 me-2"></span>
    </div>
  </div>
  <div class="status d-flex justify-content-end flex-shrink-0"><svg width="204" height="4" viewBox="0 0 204 4"><rect x="3" y=".5" width="16" height="8" rx="2" fill="#f5d05c" stroke="#a8832c"/><path d="M22 2.500h12M38 2.500h12" stroke="#666" stroke-width="2"/><circle cx="99" cy="6" r="5" fill="#eee" stroke="#777"/><rect x="147" y="1.500" width="8" height="8" fill="#eee" stroke="#777"/><circle cx="204" cy="6" r="5" fill="#eee" stroke="#777"/></svg></div>
</div>
<script src="https://cdn.jsdelivr.net/npm/bootstrap@5.3.0/dist/js/bootstrap.bundle.min.js"></script>
</body>
</html>
